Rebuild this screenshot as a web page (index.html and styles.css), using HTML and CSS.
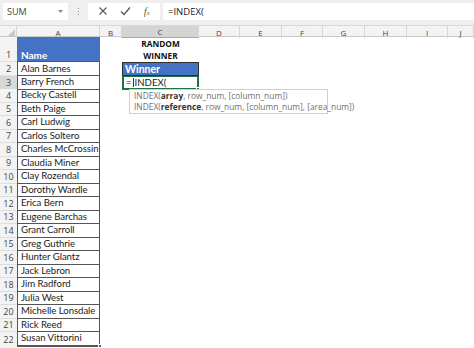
FILE: index.html
```html
<!DOCTYPE html>
<html lang="en">
<head>
<meta charset="UTF-8" />
<title>Random Winner</title>
<link rel="stylesheet" href="styles.css">
</head>
<body>

<div class="app">
  <div class="toolbar">
    <div class="namebox">
      <span>SUM</span>
      <svg width="7" height="5" viewBox="0 0 7 5"><path d="M1 1 L3.5 4 L6 1 Z" fill="#888"/></svg>
    </div>
    <div class="grip"><i></i><i></i><i></i></div>
    <div class="fx-buttons">
      <svg width="10" height="10" viewBox="0 0 10 10"><path d="M1.5 1.5 L8.5 8.5 M8.5 1.5 L1.5 8.5" stroke="#555" stroke-width="1.1" fill="none"/></svg>
      <svg width="11" height="10" viewBox="0 0 11 10"><path d="M1 5.5 L4 8.5 L10 1.5" stroke="#555" stroke-width="1.2" fill="none"/></svg>
      <span class="fx"><i>f</i><small>x</small></span>
    </div>
    <div class="formula">=INDEX(</div>
  </div>

  <div class="col-headers">
    <div class="corner"><svg width="8" height="8" viewBox="0 0 8 8"><path d="M8 0 L8 8 L0 8 Z" fill="#c8c8c8"/></svg></div>
    <div>A</div><div>B</div><div class="sel">C</div><div>D</div><div>E</div>
    <div>F</div><div>G</div><div>H</div><div>I</div><div>J</div>
  </div>

  <div class="rows">
    <div class="row tall"><div class="rh">1</div><div class="a head">Name</div><div></div><div class="c title">RANDOM<br>WINNER</div><div></div></div>
    <div class="row"><div class="rh">2</div><div class="a">Alan Barnes</div><div></div><div class="c winner">Winner</div><div></div></div>
    <div class="row"><div class="rh sel">3</div><div class="a">Barry French</div><div></div><div class="c active">=<span class="ibeam"></span>INDEX(<span class="handle"></span></div><div></div></div>
    <div class="row"><div class="rh">4</div><div class="a">Becky Castell</div><div></div><div></div><div></div></div>
    <div class="row"><div class="rh">5</div><div class="a">Beth Paige</div><div></div><div></div><div></div></div>
    <div class="row"><div class="rh">6</div><div class="a">Carl Ludwig</div><div></div><div></div><div></div></div>
    <div class="row"><div class="rh">7</div><div class="a">Carlos Soltero</div><div></div><div></div><div></div></div>
    <div class="row"><div class="rh">8</div><div class="a">Charles McCrossin</div><div></div><div></div><div></div></div>
    <div class="row"><div class="rh">9</div><div class="a">Claudia Miner</div><div></div><div></div><div></div></div>
    <div class="row"><div class="rh">10</div><div class="a">Clay Rozendal</div><div></div><div></div><div></div></div>
    <div class="row"><div class="rh">11</div><div class="a">Dorothy Wardle</div><div></div><div></div><div></div></div>
    <div class="row"><div class="rh">12</div><div class="a">Erica Bern</div><div></div><div></div><div></div></div>
    <div class="row"><div class="rh">13</div><div class="a">Eugene Barchas</div><div></div><div></div><div></div></div>
    <div class="row"><div class="rh">14</div><div class="a">Grant Carroll</div><div></div><div></div><div></div></div>
    <div class="row"><div class="rh">15</div><div class="a">Greg Guthrie</div><div></div><div></div><div></div></div>
    <div class="row"><div class="rh">16</div><div class="a">Hunter Glantz</div><div></div><div></div><div></div></div>
    <div class="row"><div class="rh">17</div><div class="a">Jack Lebron</div><div></div><div></div><div></div></div>
    <div class="row"><div class="rh">18</div><div class="a">Jim Radford</div><div></div><div></div><div></div></div>
    <div class="row"><div class="rh">19</div><div class="a">Julia West</div><div></div><div></div><div></div></div>
    <div class="row"><div class="rh">20</div><div class="a">Michelle Lonsdale</div><div></div><div></div><div></div></div>
    <div class="row"><div class="rh">21</div><div class="a">Rick Reed</div><div></div><div></div><div></div></div>
    <div class="row"><div class="rh">22</div><div class="a last">Susan Vittorini<span class="handle"></span></div><div></div><div></div><div></div></div>
    <div class="row"><div class="rh"></div><div></div><div></div><div></div><div></div></div>
  </div>

  <div class="tooltip">
    <div>INDEX(<b>array</b>, row_num, [column_num])</div>
    <div>INDEX(<b>reference</b>, row_num, [column_num], [area_num])</div>
  </div>
</div>

</body>
</html>
```

FILE: styles.css
```css
* {
  box-sizing: border-box;
}
html, body {
  margin: 0;
  height: 100%;
  overflow: hidden;
  background: #fff;
}
.app {
  position: relative;
  width: 474px;
  height: 348px;
  font-family: 'Open Sans', 'Noto Sans', sans-serif;
}

/* formula bar */
.toolbar {
  display: flex;
  align-items: center;
  height: 26px;
  padding: 0 0 3px 3px;
  background: #efefef;
  border-bottom: 1px solid #d8d8d8;
}
.namebox {
  display: flex;
  align-items: center;
  justify-content: space-between;
  width: 65px;
  height: 17px;
  padding: 0 4px 0 4px;
  background: #fff;
  font-size: 9px;
  color: #444;
}
.grip {
  display: flex;
  flex-direction: column;
  gap: 2px;
  width: 20px;
  align-items: center;
}
.grip i {
  width: 1px;
  height: 1px;
  background: #999;
}
.fx-buttons {
  display: flex;
  align-items: center;
  justify-content: space-around;
  width: 72px;
  height: 17px;
  padding: 0 4px;
  background: #fff;
}
.fx {
  font-family: 'Liberation Serif', serif;
  font-size: 11px;
  color: #666;
}
.fx small {
  font-size: 7px;
  font-style: italic;
}
.formula {
  flex: 1;
  height: 17px;
  margin-left: 3px;
  padding: 2px 5px 0;
  background: #fff;
  font-size: 9.5px;
  color: #222;
}

/* column headers */
.col-headers {
  display: grid;
  grid-template-columns: 17px 83px 22px 77px 41px 42px 41px 42px 42px 41px 1fr;
  height: 11px;
  background: #f3f3f3;
  border-bottom: 1px solid #c8c8c8;
}
.col-headers div {
  display: flex;
  align-items: center;
  justify-content: center;
  font-size: 8px;
  color: #444;
  border-right: 1px solid #d6d6d6;
}
.col-headers .corner {
  justify-content: flex-end;
  align-items: flex-end;
  padding: 0 1px 1px 0;
}
.col-headers .sel {
  background: #d4d4d4;
  border-bottom: 1px solid #a8a8a8;
}

/* rows */
.row {
  display: grid;
  grid-template-columns: 17px 83px 22px 77px 1fr;
  height: 13.5px;
}
.row.tall {
  height: 25px;
}
.rh {
  display: flex;
  align-items: flex-end;
  justify-content: center;
  background: #f3f3f3;
  border-bottom: 1px solid #dedede;
  font-size: 9px;
  line-height: 12px;
  color: #444;
}
.rh.sel {
  background: #d8d8d8;
}
.a {
  position: relative;
  display: flex;
  align-items: flex-end;
  padding: 0 0 0 3px;
  border-left: 1px solid #555;
  border-right: 1px solid #555;
  border-bottom: 1px solid #555;
  font-family: 'Lato', sans-serif;
  font-size: 9.6px;
  letter-spacing: -0.05px;
  line-height: 12.5px;
  color: #222;
  white-space: nowrap;
}
.a.head {
  background: #4472c4;
  color: #fff;
  font-weight: bold;
  font-size: 10px;
  border-color: #4472c4;
  border-bottom-color: #555;
}
.a.last {
  border-bottom: 2px solid #555;
}
.c {
  position: relative;
  font-family: 'Lato', sans-serif;
}
.c.title {
  text-align: center;
  font-family: 'Open Sans', sans-serif;
  font-weight: bold;
  font-size: 8.3px;
  line-height: 12px;
  color: #111;
  padding-top: 1px;
}
.c.winner {
  display: flex;
  align-items: flex-end;
  padding-left: 2px;
  background: #4472c4;
  border: 1px solid #2f2f2f;
  color: #fff;
  font-weight: bold;
  font-size: 10.5px;
  line-height: 12px;
}
.c.active {
  display: flex;
  align-items: center;
  padding-left: 2px;
  border: 2px solid #217346;
  border-top-width: 1px;
  font-size: 9.6px;
  color: #222;
}
.ibeam {
  display: inline-block;
  width: 1px;
  height: 9px;
  margin: 0 1px;
  background: #333;
}
.handle {
  position: absolute;
  right: -3px;
  bottom: -3px;
  width: 4px;
  height: 4px;
  background: #217346;
  border: 1px solid #fff;
}
.a .handle {
  background: #4a5c8c;
}

/* function tooltip */
.tooltip {
  position: absolute;
  left: 129px;
  top: 89px;
  width: 199px;
  height: 25px;
  padding: 1px 4px;
  background: #fff;
  border: 1px solid #cfcfcf;
  font-size: 8.4px;
  line-height: 10.5px;
  color: #707070;
  white-space: nowrap;
}
.tooltip b {
  color: #333;
}
```
